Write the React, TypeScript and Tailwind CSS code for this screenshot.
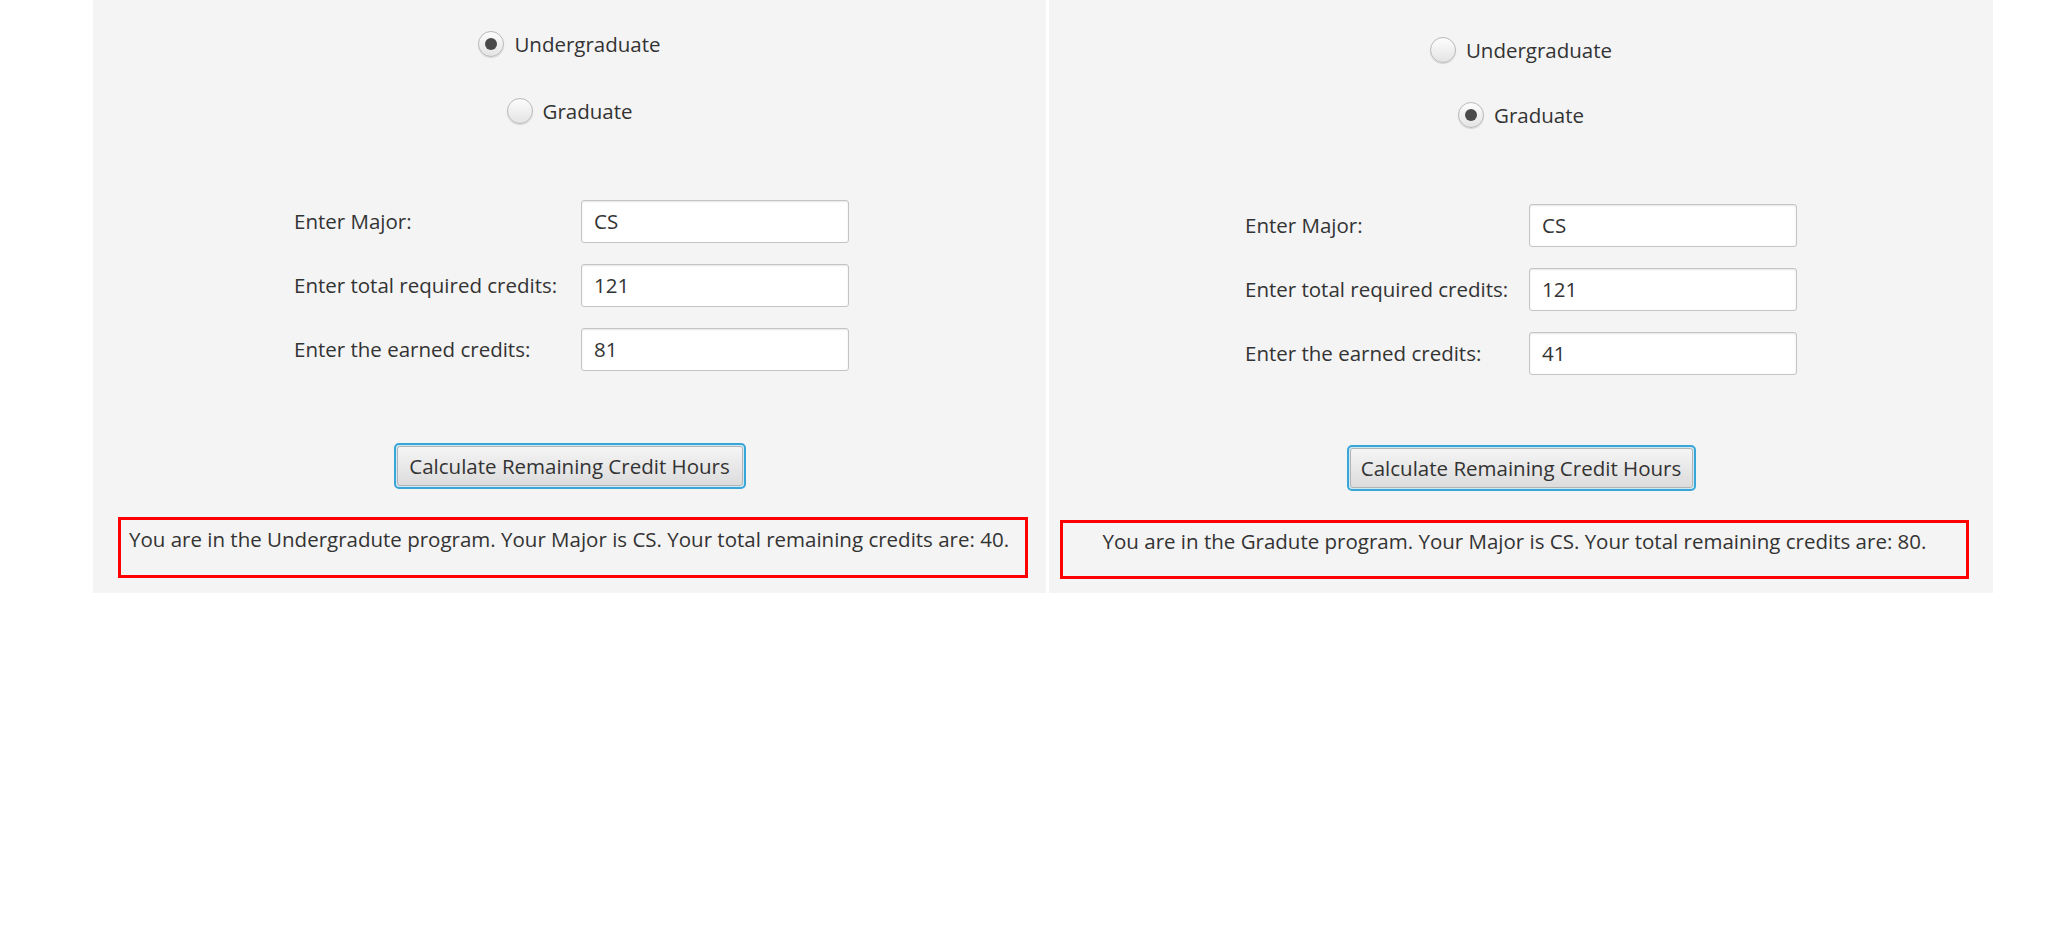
import React from "react";

const font = { fontFamily: '"Open Sans", "Noto Sans", "Liberation Sans", sans-serif' };

function Radio({ checked, label }: { checked: boolean; label: string }) {
  return (
    <div className="flex items-center h-[26px] gap-[10px]">
      <span className="relative w-[26px] h-[26px] rounded-full border border-[#b9b9b9] bg-gradient-to-b from-[#fdfdfd] to-[#e4e4e4] shadow-[0_1px_1px_rgba(0,0,0,0.12)] flex items-center justify-center">
        {checked && <span className="w-[12px] h-[12px] rounded-full bg-[#4a4a4a]" />}
      </span>
      <span className="text-[20.5px] leading-[26px] text-[#333333]">{label}</span>
    </div>
  );
}

function Field({ value }: { value: string }) {
  return (
    <div className="h-[43px] w-[268px] rounded-[3px] border border-[#c4c4c4] bg-white shadow-[inset_0_1px_2px_rgba(0,0,0,0.10)] flex items-center pl-[12px] text-[20.5px] text-[#333333]">
      {value}
    </div>
  );
}

function Form({ col1, vals }: { col1: string; vals: string[] }) {
  const labels = ["Enter Major:", "Enter total required credits:", "Enter the earned credits:"];
  return (
    <div className={`grid ${col1} gap-y-[21px]`}>
      {labels.map((l, i) => (
        <React.Fragment key={l}>
          <div className="h-[43px] flex items-center text-[20.5px] text-[#333333] whitespace-nowrap">{l}</div>
          <Field value={vals[i]} />
        </React.Fragment>
      ))}
    </div>
  );
}

function CalcButton({ w }: { w: string }) {
  return (
    <div className={`${w} h-[46px] rounded-[5px] border-2 border-[#3aa6d8] p-[1px] bg-[#cfe9f6]`}>
      <div className="h-full w-full rounded-[3px] border border-[#b3b3b3] bg-gradient-to-b from-[#f5f5f5] to-[#dcdcdc] flex items-center justify-center text-[20.5px] text-[#333333] whitespace-nowrap">
        Calculate Remaining Credit Hours
      </div>
    </div>
  );
}

export default function App() {
  return (
    <div className="w-[2048px] h-[948px] bg-white flex items-start pl-[93px] gap-[3px]" style={font}>
      {/* Left panel */}
      <div className="w-[953px] h-[593px] bg-[#f4f4f4] flex flex-col items-center">
        <div className="mt-[31px]">
          <Radio checked label="Undergraduate" />
        </div>
        <div className="mt-[41px]">
          <Radio checked={false} label="Graduate" />
        </div>
        <div className="mt-[76px] ml-[4px]">
          <Form col1="grid-cols-[287px_268px]" vals={["CS", "121", "81"]} />
        </div>
        <div className="mt-[72px]">
          <CalcButton w="w-[352px]" />
        </div>
        <div className="mt-[28px] self-start ml-[25px] w-[910px] h-[61px] border-[3px] border-[#ff0000] pt-[6px] pl-[8px] text-[20.5px] leading-[26px] text-[#333333] whitespace-nowrap">
          You are in the Undergradute program. Your Major is CS. Your total remaining credits are: 40.
        </div>
      </div>

      {/* Right panel */}
      <div className="w-[944px] h-[593px] bg-[#f4f4f4] flex flex-col items-center">
        <div className="mt-[37px]">
          <Radio checked={false} label="Undergraduate" />
        </div>
        <div className="mt-[39px]">
          <Radio checked label="Graduate" />
        </div>
        <div className="mt-[76px]">
          <Form col1="grid-cols-[284px_268px]" vals={["CS", "121", "41"]} />
        </div>
        <div className="mt-[70px]">
          <CalcButton w="w-[349px]" />
        </div>
        <div className="mt-[29px] self-start ml-[11px] w-[909px] h-[59px] border-[3px] border-[#ff0000] pt-[5px] text-center text-[20.5px] leading-[26px] text-[#333333] whitespace-nowrap">
          You are in the Gradute program. Your Major is CS. Your total remaining credits are: 80.
        </div>
      </div>
    </div>
  );
}
